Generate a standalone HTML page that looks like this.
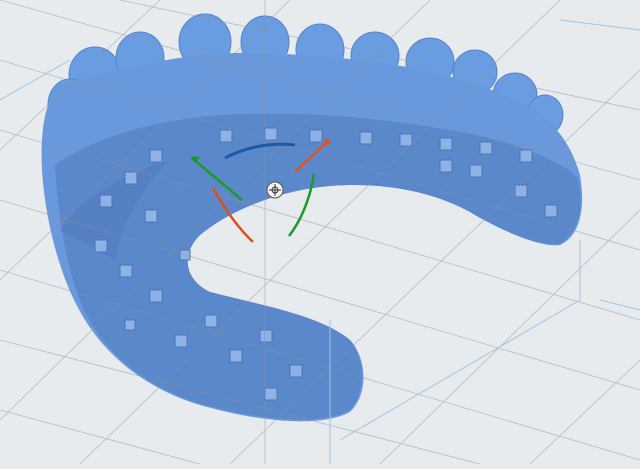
<!DOCTYPE html><html><head><style>html,body{margin:0;padding:0;background:#e7ebee;overflow:hidden}</style></head><body>
<svg width="640" height="464" viewBox="0 0 640 464" xmlns="http://www.w3.org/2000/svg">
<rect width="640" height="464" fill="#e7ebee"/>
<!-- teeth bumps -->
<g fill="#6a9ce2" stroke="#5585cc" stroke-width="1">
<ellipse cx="95" cy="75" rx="26" ry="28"/><ellipse cx="140" cy="58" rx="24" ry="26"/><ellipse cx="205" cy="42" rx="26" ry="28"/>
<ellipse cx="265" cy="42" rx="24" ry="26"/><ellipse cx="320" cy="50" rx="24" ry="26"/><ellipse cx="375" cy="56" rx="24" ry="24"/>
<ellipse cx="430" cy="62" rx="24" ry="24"/><ellipse cx="475" cy="72" rx="22" ry="22"/><ellipse cx="515" cy="95" rx="22" ry="22"/>
<ellipse cx="545" cy="115" rx="18" ry="20"/><ellipse cx="70" cy="105" rx="22" ry="26"/>
</g>
<!-- outer arch -->
<path d="M60,85 C110,70 160,60 200,55 C250,50 300,55 340,58 C400,64 460,74 515,100 C550,115 570,140 580,175 C585,205 582,235 560,245 C540,248 500,230 470,212 C430,190 380,182 330,186 C280,190 230,210 200,235 C180,255 185,280 210,292 C260,305 320,315 350,340 C368,360 368,395 350,412 C320,428 260,422 200,405 C150,390 110,360 85,320 C60,280 45,220 42,170 C40,130 45,100 60,85 Z" fill="#6a98dc"/>
<!-- darker platform band -->
<path d="M55,165 C90,140 150,120 220,115 C300,110 380,118 450,130 C510,140 560,160 578,178 C584,205 580,232 560,244 C540,247 500,230 470,212 C430,190 380,182 330,186 C280,190 230,210 200,235 C180,255 185,280 210,292 C260,305 320,315 350,340 C366,358 366,392 350,410 C320,426 260,420 200,404 C150,388 110,358 88,318 C68,280 58,220 55,165 Z" fill="#5b87cb"/>
<path d="M60,230 C80,200 120,175 170,160 C140,190 120,230 115,260 Z" fill="#5680c4"/>
<!-- holes pattern -->
<g fill="#8fb2e6" stroke="#4b74b5" stroke-width="1">
<rect x="220" y="130" width="12" height="12"/><rect x="265" y="128" width="12" height="12"/><rect x="310" y="130" width="12" height="12"/>
<rect x="360" y="132" width="12" height="12"/><rect x="400" y="134" width="12" height="12"/><rect x="440" y="138" width="12" height="12"/>
<rect x="480" y="142" width="12" height="12"/><rect x="520" y="150" width="12" height="12"/><rect x="150" y="150" width="12" height="12"/>
<rect x="125" y="172" width="12" height="12"/><rect x="100" y="195" width="12" height="12"/><rect x="95" y="240" width="12" height="12"/>
<rect x="120" y="265" width="12" height="12"/><rect x="150" y="290" width="12" height="12"/><rect x="175" y="335" width="12" height="12"/>
<rect x="205" y="315" width="12" height="12"/><rect x="230" y="350" width="12" height="12"/><rect x="260" y="330" width="12" height="12"/>
<rect x="290" y="365" width="12" height="12"/><rect x="265" y="388" width="12" height="12"/><rect x="145" y="210" width="12" height="12"/>
<rect x="470" y="165" width="12" height="12"/><rect x="515" y="185" width="12" height="12"/><rect x="545" y="205" width="12" height="12"/>
<rect x="440" y="160" width="12" height="12"/><rect x="180" y="250" width="10" height="10"/><rect x="125" y="320" width="10" height="10"/>
</g>
<!-- grid -->
<g stroke="#8a949c" stroke-width="0.8" opacity="0.55">
<line x1="0" y1="60" x2="640" y2="250"/><line x1="0" y1="130" x2="640" y2="320"/><line x1="0" y1="200" x2="640" y2="390"/>
<line x1="0" y1="270" x2="640" y2="460"/><line x1="0" y1="340" x2="480" y2="464"/><line x1="0" y1="0" x2="640" y2="180"/>
<line x1="120" y1="0" x2="640" y2="110"/><line x1="0" y1="410" x2="200" y2="464"/>
<line x1="0" y1="150" x2="160" y2="0"/><line x1="0" y1="280" x2="290" y2="0"/><line x1="0" y1="420" x2="430" y2="0"/>
<line x1="80" y1="464" x2="560" y2="0"/><line x1="230" y1="464" x2="640" y2="70"/><line x1="380" y1="464" x2="640" y2="210"/>
<line x1="530" y1="464" x2="640" y2="360"/><line x1="265" y1="0" x2="265" y2="464"/>
</g>
<g stroke="#9cc6e6" stroke-width="1" fill="none"><path d="M0,100 L70,60 M560,20 L640,30 M600,300 L640,310 M330,320 L330,464 M580,240 L580,300 L340,440"/></g>
<!-- gizmo -->
<path d="M225,158 C250,145 275,143 295,145" stroke="#1a5aa8" stroke-width="3" fill="none"/>
<path d="M242,200 L192,158" stroke="#1c9a2a" stroke-width="2.5"/><path d="M190,156 l10,1 l-5,6z" fill="#1c9a2a"/>
<path d="M295,172 L326,143" stroke="#e0531e" stroke-width="2.5"/><circle cx="327" cy="142" r="3" fill="#e0531e"/>
<path d="M213,188 C225,210 240,230 253,242" stroke="#d9501c" stroke-width="2.5" fill="none"/>
<path d="M314,174 C310,200 300,222 289,236" stroke="#1c9a2a" stroke-width="2.5" fill="none"/>
<circle cx="275" cy="190" r="8" fill="#f4f4f4" stroke="#555" stroke-width="1"/>
<path d="M275,184 v12 M269,190 h12" stroke="#333" stroke-width="1"/><circle cx="275" cy="190" r="3" fill="none" stroke="#333"/>
</svg></body></html>
